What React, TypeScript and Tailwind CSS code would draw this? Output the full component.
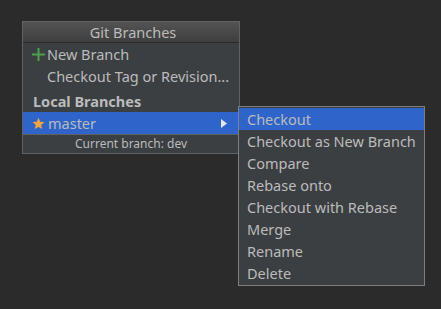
import React from "react";

const font = { fontFamily: '"Noto Sans", "Open Sans", sans-serif' };

export default function App() {
  const sub = [
    "Checkout",
    "Checkout as New Branch",
    "Compare",
    "Rebase onto",
    "Checkout with Rebase",
    "Merge",
    "Rename",
    "Delete",
  ];
  return (
    <div className="w-[441px] h-[309px] bg-[#2b2b2b] relative overflow-hidden text-[14.5px] text-[#bbbbbb]" style={font}>
      <div className="absolute left-[22px] top-[21px] w-[218px] border border-[#5f6264] bg-[#3c3f41] flex flex-col">
        <div className="h-[20px] flex items-center justify-center pl-[4px] bg-gradient-to-b from-[#535353] to-[#3f3f3f] text-[#bbbbbb] leading-none">
          Git Branches
        </div>
        <div className="h-px bg-[#2a2a2a]" />
        <div className="h-[22px] flex items-center pl-[9px] leading-none">
          <svg width="13" height="13" viewBox="0 0 13 13" className="mr-[2px]">
            <rect x="5.5" y="0" width="2" height="13" fill="#4aa14a" />
            <rect x="0" y="5.5" width="13" height="2" fill="#4aa14a" />
          </svg>
          New Branch
        </div>
        <div className="h-[22px] flex items-center pl-[24px] leading-none">Checkout Tag or Revision...</div>
        <div className="h-[25px] flex items-center pl-[10px] pt-[3px] font-bold leading-none">Local Branches</div>
        <div className="h-[22px] flex items-center pl-[9px] bg-[#2f65ca] leading-none relative">
          <svg width="13" height="13" viewBox="0 0 24 24" className="mr-[3px]">
            <path d="M12 1.5l3.2 7.2 7.8.7-5.9 5.2 1.8 7.7L12 18.3l-6.9 4 1.8-7.7L1 9.4l7.8-.7z" fill="#f2a33a" />
          </svg>
          master
          <svg width="6" height="9" viewBox="0 0 6 9" className="absolute right-[12px] top-[7px]">
            <path d="M0 0 L6 4.5 L0 9 Z" fill="#e6e6e6" />
          </svg>
        </div>
        <div className="h-px bg-[#5f6264]" />
        <div className="h-[18px] flex items-center justify-center text-[12px] leading-none">Current branch: dev</div>
      </div>
      <div className="absolute left-[238px] top-[106px] w-[187px] border border-[#7c7f81] bg-[#3c3f41] flex flex-col py-px">
        {sub.map((s, i) => (
          <div
            key={s}
            className={`h-[22px] flex items-center pl-[8px] leading-none ${i === 0 ? "bg-[#2f65ca]" : ""}`}
          >
            {s}
          </div>
        ))}
      </div>
    </div>
  );
}
